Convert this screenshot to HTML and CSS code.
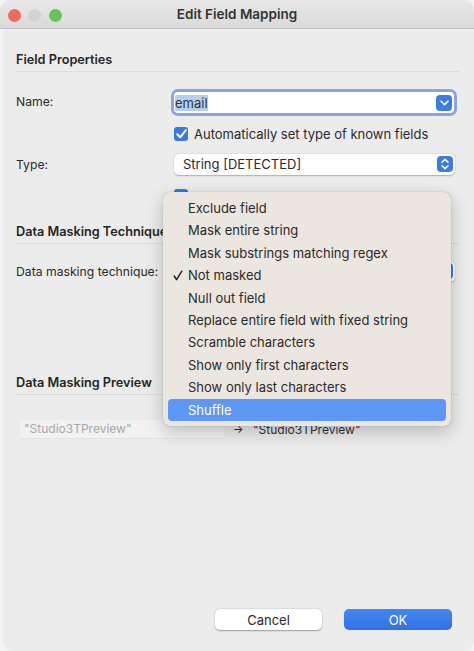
FILE: index.html
```html
<!DOCTYPE html>
<html lang="en">
<head>
<meta charset="utf-8">
<title>Edit Field Mapping</title>
<link rel="stylesheet" href="styles.css">
</head>
<body>
<div class="window">
  <header class="titlebar">
    <div class="lights"><span class="light red"></span><span class="light grey"></span><span class="light green"></span></div>
    <h1 class="title">Edit Field Mapping</h1>
  </header>
  <main class="content">
    <section class="section props">
      <h2 class="heading">Field Properties</h2>
      <div class="row name-row">
        <label class="label name-label">Name:</label>
        <div class="combo">
          <span class="combo-text"><span class="selected">email</span></span>
          <span class="stepper"><svg width="9" height="6" viewBox="0 0 9 6"><path d="M1 1.2 4.5 4.6 8 1.2" fill="none" stroke="#fff" stroke-width="1.6" stroke-linecap="round" stroke-linejoin="round"/></svg></span>
        </div>
      </div>
      <div class="row check-row">
        <span class="label"></span>
        <div class="check-wrap">
          <span class="checkbox"><svg width="11" height="10" viewBox="0 0 11 10"><path d="M1.3 5.2 4.2 8.3 9.7 1.4" fill="none" stroke="#fff" stroke-width="2" stroke-linecap="round" stroke-linejoin="round"/></svg></span>
          <span class="check-label">Automatically set type of known fields</span>
        </div>
      </div>
      <div class="row type-row">
        <label class="label">Type:</label>
        <div class="select">
          <span class="select-text">String [DETECTED]</span>
          <span class="stepper"><svg width="8" height="12" viewBox="0 0 8 12"><path d="M1 4.2 4 1.4 7 4.2M1 7.8 4 10.6 7 7.8" fill="none" stroke="#fff" stroke-width="1.5" stroke-linecap="round" stroke-linejoin="round"/></svg></span>
        </div>
      </div>
      <div class="row hidden-check-row">
        <span class="label"></span>
        <span class="checkbox"></span>
      </div>
    </section>
    <section class="section masking">
      <h2 class="heading">Data Masking Technique</h2>
      <div class="row technique-row">
        <label class="label wide">Data masking technique:</label>
        <div class="select">
          <span class="select-text"></span>
          <span class="stepper"></span>
        </div>
      </div>
    </section>
    <section class="section preview">
      <h2 class="heading">Data Masking Preview</h2>
      <div class="preview-row">
        <span class="preview-input">"Studio3TPreview"</span>
        <span class="arrow">→</span>
        <span class="preview-out">"Studio3TPreview"</span>
      </div>
    </section>
    <footer class="actions">
      <button class="btn cancel">Cancel</button>
      <button class="btn primary">OK</button>
    </footer>
  </main>
  <ul class="menu">
    <li class="item">Exclude field</li>
    <li class="item">Mask entire string</li>
    <li class="item">Mask substrings matching regex</li>
    <li class="item checked"><svg class="tick" width="10" height="11" viewBox="0 0 10 11"><path d="M1.2 6 3.6 9.6 8.8 1.2" fill="none" stroke="#222" stroke-width="1.5" stroke-linecap="round" stroke-linejoin="round"/></svg>Not masked</li>
    <li class="item">Null out field</li>
    <li class="item">Replace entire field with fixed string</li>
    <li class="item">Scramble characters</li>
    <li class="item">Show only first characters</li>
    <li class="item">Show only last characters</li>
    <li class="item active">Shuffle</li>
  </ul>
</div>
</body>
</html>
```
FILE: styles.css
```css
* { box-sizing: border-box; }
html, body { margin: 0; height: 100%; background: #f4f4f4; }
body { font-family: Inter, "Liberation Sans", sans-serif; font-size: 13px; color: #2b2b2b; overflow: hidden; }
.window { position: relative; width: 474px; height: 651px; background: #ececec; border-radius: 10px; overflow: hidden; display: flex; flex-direction: column; box-shadow: inset 3px 0 0 #f3f3f3; }
.titlebar { position: relative; height: 29px; flex: none; background: linear-gradient(#e9e9e9, #d9d9d9); border-bottom: 1px solid #c4c4c4; display: flex; align-items: center; justify-content: center; }
.lights { position: absolute; left: 7.5px; top: 8.5px; display: flex; gap: 7.5px; }
.light { width: 13px; height: 13px; border-radius: 50%; }
.red { background: #ee6a5f; }
.grey { background: #d2d2d2; }
.green { background: #62c554; }
.title { margin: 0; font-size: 13.5px; font-weight: 600; color: #333; }
.content { flex: 1; display: flex; flex-direction: column; padding: 0 16px; }
.heading { margin: 0 -1px 0 -1px; padding-left: 1px; font-size: 12.7px; font-weight: 600; color: #262626; height: 20px; line-height: 16px; border-bottom: 1px solid #dcdcdc; }
.props { padding-top: 23px; }
.row { display: flex; align-items: center; }
.label { width: 155px; flex: none; font-size: 12.2px; }
.name-label { padding-bottom: 2px; }
.wide { white-space: nowrap; }
.name-row { margin-top: 20px; height: 21px; }
.combo { width: 280px; height: 21px; margin-left: 3px; background: #fff; border-radius: 4px; box-shadow: 0 0 0 3px #8ea3dc; display: flex; align-items: center; justify-content: space-between; padding: 0 2px 0 1px; }
.selected { background: #b3d0f3; font-size: 13px; color: #333; }
.stepper { width: 16px; height: 16px; border-radius: 4px; background: #3c7be3; display: flex; align-items: center; justify-content: center; }
.check-row { margin-top: 11px; height: 20px; }
.check-wrap { display: flex; align-items: center; gap: 6px; margin-left: 3px; }
.checkbox { width: 14px; height: 14px; border-radius: 3px; background: #3c78e0; display: flex; align-items: center; justify-content: center; flex: none; }
.check-label { font-size: 13px; white-space: nowrap; }
.type-row { margin-top: 9px; height: 22px; }
.select { width: 281px; height: 21px; margin-left: 3px; background: #fff; border-radius: 5px; box-shadow: 0 0.5px 1.5px rgba(0,0,0,.28); display: flex; align-items: center; justify-content: space-between; padding: 0 2px 0 9px; font-size: 13px; }
.hidden-check-row { margin-top: 14px; height: 14px; }
.hidden-check-row .checkbox { margin-left: 3px; }
.masking { margin-top: 21px; }
.technique-row { margin-top: 16px; height: 22px; }
.preview { margin-top: 93px; }
.preview-row { display: flex; align-items: center; margin-top: 24px; height: 20px; }
.preview-input { width: 204px; height: 19px; margin-left: 4px; background: #f2f2f2; border-bottom: 1px solid #e2e2e2; color: #a8a8a8; font-size: 12px; padding-left: 4px; line-height: 18px; }
.arrow { margin-left: 9px; width: 20px; font-size: 11px; color: #222; }
.preview-out { font-size: 12px; color: #333; }
.actions { margin-top: auto; margin-bottom: 21px; display: flex; justify-content: flex-end; gap: 22px; padding-right: 6px; }
.btn { width: 108px; height: 21px; padding: 0; border: 0; border-radius: 5px; background: #fff; box-shadow: 0 0.5px 1.5px rgba(0,0,0,.35); font: 13px Inter, "Liberation Sans", sans-serif; color: #2b2b2b; }
.cancel { width: 107px; }
.primary { background: linear-gradient(#4387f0, #3272e6); color: #fff; box-shadow: none; }
.menu { position: absolute; left: 163px; top: 192px; width: 288px; height: 234px; margin: 0; padding: 5px; list-style: none; background: #ece6e1; border-radius: 7px; box-shadow: 0 0 1px rgba(0,0,0,.4), 0 6px 18px rgba(0,0,0,.22); }
.item { position: relative; height: 22.4px; line-height: 22.4px; padding-left: 20px; font-size: 13px; color: #2b2b2b; border-radius: 4px; white-space: nowrap; }
.tick { position: absolute; left: 5px; top: 6px; }
.active { background: #5f97f5; color: #fff; }
```
